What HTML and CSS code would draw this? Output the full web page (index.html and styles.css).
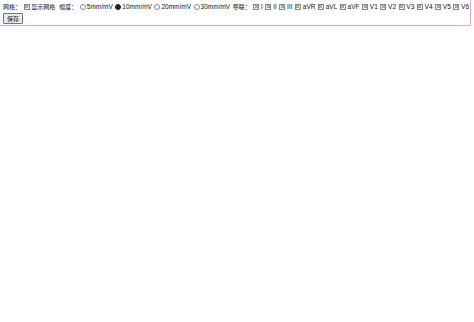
FILE: index.html
```html
<!DOCTYPE html>
<html>
<head>
<meta charset="utf-8">
<link rel="stylesheet" href="styles.css">
</head>
<body>
<div class="panel">
  <div class="row">
    <span class="lbl cjk">网格：</span>
    <label class="opt optc"><span class="cb"></span><span class="cjk">显示网格</span></label>
    <span class="lbl cjk">幅度：</span>
    <label class="opt"><span class="rb"></span>5mm/mV</label>
    <label class="opt"><span class="rb on"></span>10mm/mV</label>
    <label class="opt"><span class="rb"></span>20mm/mV</label>
    <label class="opt"><span class="rb"></span>30mm/mV</label>
    <span class="lbl cjk">导联：</span>
    <label class="opt"><span class="cb"></span>I</label>
    <label class="opt"><span class="cb"></span>II</label>
    <label class="opt"><span class="cb"></span>III</label>
    <label class="opt"><span class="cb"></span>aVR</label>
    <label class="opt"><span class="cb"></span>aVL</label>
    <label class="opt"><span class="cb"></span>aVF</label>
    <label class="opt"><span class="cb"></span>V1</label>
    <label class="opt"><span class="cb"></span>V2</label>
    <label class="opt"><span class="cb"></span>V3</label>
    <label class="opt"><span class="cb"></span>V4</label>
    <label class="opt"><span class="cb"></span>V5</label>
    <label class="opt"><span class="cb"></span>V6</label>
  </div>
  <div class="btnrow"><button class="btn"><span class="cjk">保存</span></button></div>
</div>
</body>
</html>
```
FILE: styles.css
```css
html, body { margin: 0; padding: 0; background: #fff; }
body { font-family: "Liberation Sans", "Noto Sans CJK SC", sans-serif; font-size: 6.5px; color: #111; }
.cjk { font-size: 6px; }
.panel { width: 471px; border: 1px solid #e6a9b6; border-top: none; border-left: none; padding: 2px 0 1px 3px; box-sizing: border-box; height: 26px; }
.row { display: flex; align-items: center; white-space: nowrap; height: 9px; }
.lbl { margin-right: 2.5px; }
.opt { display: inline-flex; align-items: center; margin-right: 2.5px; }
.optc { margin-right: 4px; }
.cb { width: 4px; height: 4px; border: 1px solid #888; margin-right: 1.8px; position: relative; }
.cb::before, .cb::after { content: ""; position: absolute; left: -0.5px; top: 1.5px; width: 5px; height: 1px; background: #777; }
.cb::before { transform: rotate(45deg); }
.cb::after { transform: rotate(-45deg); }
.rb { width: 4px; height: 4px; border: 1px solid #888; border-radius: 50%; margin-right: 1px; position: relative; }
.rb.on { background: #222; border-color: #222; }
.btnrow { margin-top: 2px; }
.btn { font-family: inherit; font-size: 6.5px; padding: 1px 3px; height: 11px; line-height: 7px; border: 1px solid #777; background: #e9e9e9; color: #222; border-radius: 1px; }
```
